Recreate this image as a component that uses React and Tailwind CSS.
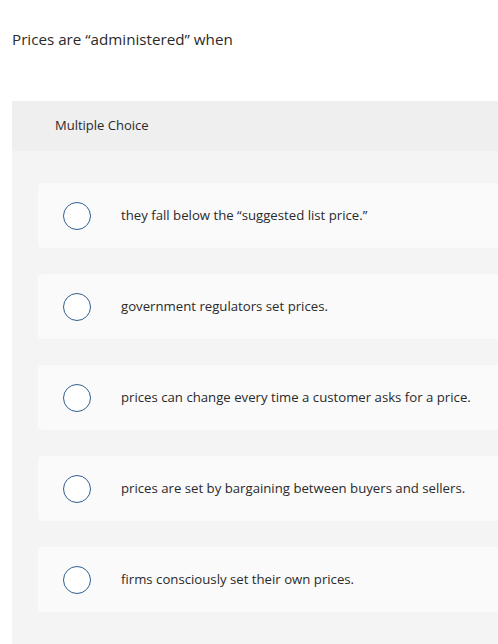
import React from 'react';

const choices = [
  'they fall below the \u201csuggested list price.\u201d',
  'government regulators set prices.',
  'prices can change every time a customer asks for a price.',
  'prices are set by bargaining between buyers and sellers.',
  'firms consciously set their own prices.',
];

const Choice = ({ label }) => (
  <div className="flex h-[65px] items-center rounded bg-[#fafafa]">
    <span className="ml-[25px] h-[28px] w-[28px] shrink-0 rounded-full border-[1.5px] border-[#2f5f8f] bg-white" />
    <span className="ml-[30px] pt-px text-[13.2px] text-[#2a2a2a]">{label}</span>
  </div>
);

export default function App() {
  return (
    <div className="h-[644px] w-[498px] overflow-hidden bg-white font-['Open_Sans',sans-serif]">
      {/* Question */}
      <p className="pl-3 pt-[29px] text-[15.2px] leading-5 text-[#2a2a2a]">
        Prices are &ldquo;administered&rdquo; when
      </p>

      {/* Answer panel */}
      <div className="ml-3 mt-[52px] w-[520px] bg-[#f4f4f4] pb-10">
        <div className="flex h-[50px] items-center bg-[#efefef] pl-[43px] text-[13px] text-[#2a2a2a]">
          Multiple Choice
        </div>
        <div className="flex flex-col gap-[26px] pl-[26px] pt-8">
          {choices.map((c, i) => (
            <Choice key={i} label={c} />
          ))}
        </div>
      </div>
    </div>
  );
}
